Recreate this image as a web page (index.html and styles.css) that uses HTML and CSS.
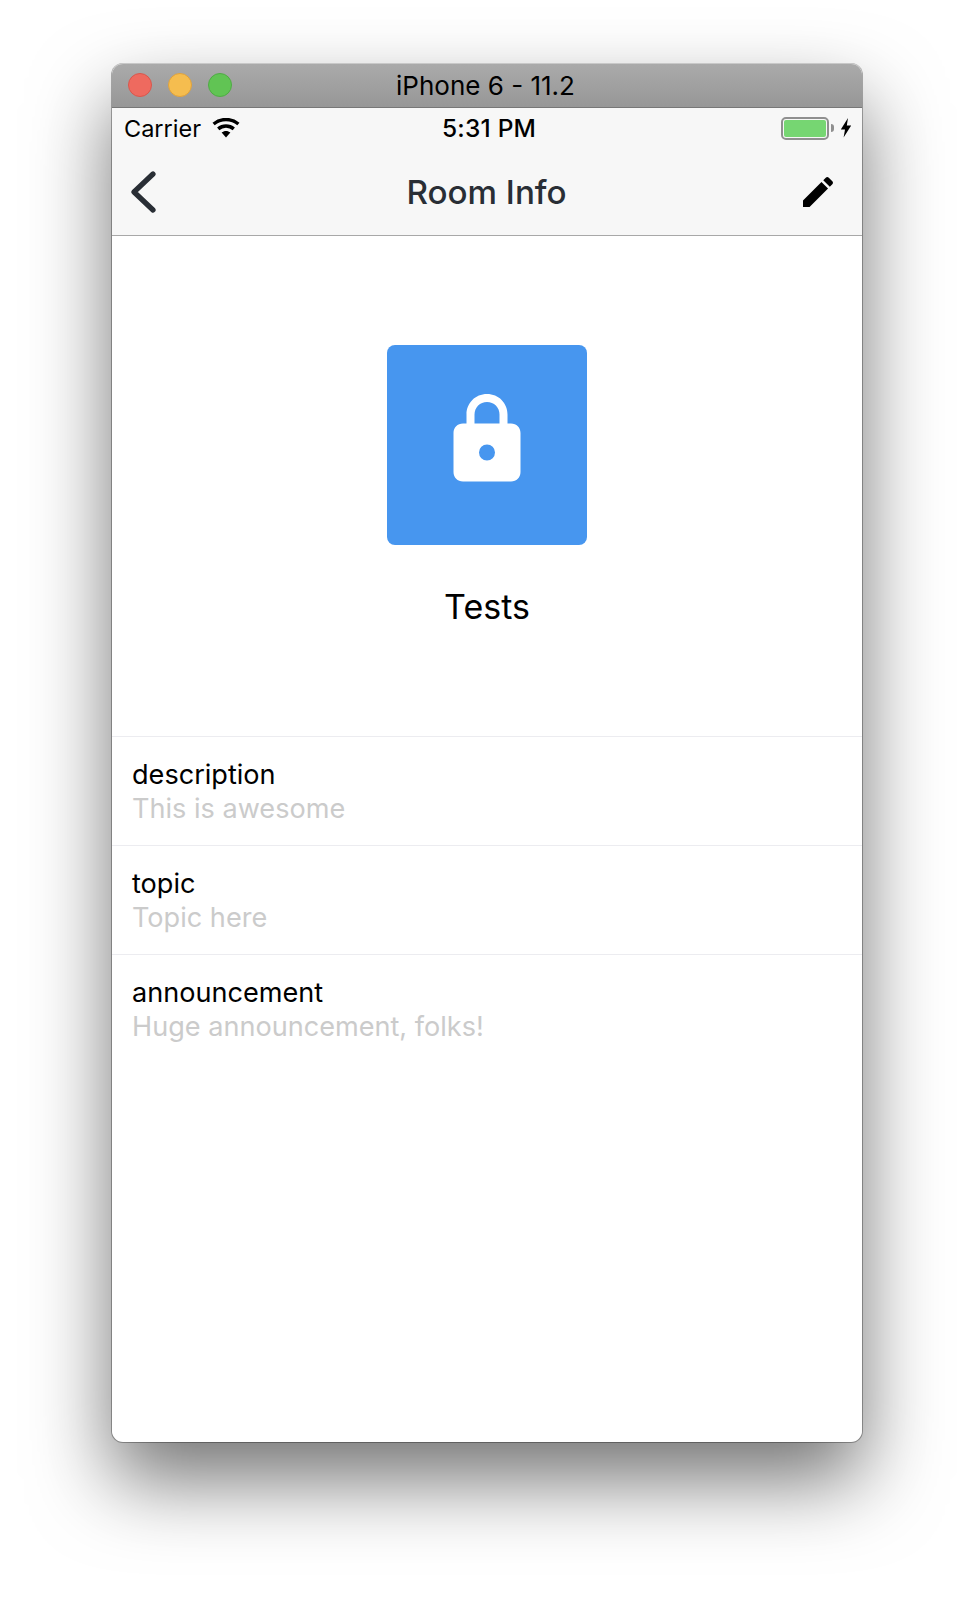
FILE: index.html
```html
<!DOCTYPE html>
<html lang="en">
<head>
    <meta charset="UTF-8">
    <meta name="viewport" content="width=device-width, initial-scale=1.0">
    <title>iPhone 6 - 11.2</title>
    <link rel="stylesheet" href="styles.css">
</head>
<body>

    <div class="window">
        <div class="titlebar">
            <div class="lights">
                <span class="light light-red"></span>
                <span class="light light-yellow"></span>
                <span class="light light-green"></span>
            </div>
            <span class="title-text">iPhone 6 - 11.2</span>
        </div>

        <div class="statusbar">
            <div class="status-left">
                <span>Carrier</span>
                <svg class="wifi" viewBox="0 0 28 20" width="28" height="20">
                    <path d="M14 19.5 L9.6 14.6 C12.2 12.4 15.8 12.4 18.4 14.6 Z" fill="#000"/>
                    <path d="M6.2 10.9 C10.8 7 17.2 7 21.8 10.9" fill="none" stroke="#000" stroke-width="3.4"/>
                    <path d="M1.600 6 C8.800 0 19.200 0 26.400 6" fill="none" stroke="#000" stroke-width="3.4"/>
                </svg>
            </div>
            <span class="status-time">5:31 PM</span>
            <div class="status-right">
                <span class="battery"><span class="battery-fill"></span></span>
                <span class="battery-tip"></span>
                <svg class="bolt" viewBox="0 0 12 20" width="12" height="20">
                    <path d="M8 0 L0.8 11.4 H5 L3.6 19.6 L11.2 7.6 H6.8 Z" fill="#000"/>
                </svg>
            </div>
        </div>

        <div class="navbar">
            <svg class="back" viewBox="0 0 26 44" width="26" height="44">
                <path d="M23 4 L4 22 L23 40" fill="none" stroke="#292e35" stroke-width="5.2" stroke-linecap="round" stroke-linejoin="round"/>
            </svg>
            <h1>Room Info</h1>
            <svg class="edit" viewBox="0 0 32 32" width="30" height="30">
                <path d="M0 25 L19.7 5.3 L26.7 12.3 L7 32 H0 Z M21.6 3.4 L24.3 0.7 C25.2 -0.2 26.6 -0.2 27.5 0.7 L31.3 4.5 C32.2 5.4 32.2 6.8 31.3 7.7 L28.6 10.4 Z" fill="#000"/>
            </svg>
        </div>

        <div class="room-head">
            <div class="avatar">
                <svg viewBox="0 0 68 88" width="68" height="88">
                    <path d="M34 0 C45.6 0 54.5 9 54.5 20.5 V31 H46.5 V20.5 C46.5 13.400 41 8 34 8 C27 8 21.500 13.400 21.500 20.5 V31 H13.500 V20.5 C13.500 9 22.400 0 34 0 Z" fill="#fff"/>
                    <path fill-rule="evenodd" d="M10 29.500 H58 C63.500 29.500 67.500 33.500 67.500 39 V78 C67.500 83.500 63.500 87.500 58 87.500 H10 C4.500 87.500 0.500 83.500 0.500 78 V39 C0.500 33.500 4.500 29.500 10 29.500 Z M34 50.500 A8 8 0 1 0 34 66.500 A8 8 0 1 0 34 50.500 Z" fill="#fff"/>
                </svg>
            </div>
            <div class="room-name">Tests</div>
        </div>

        <div class="info-list">
            <div class="info-row">
                <div class="info-label">description</div>
                <div class="info-value">This is awesome</div>
            </div>
            <div class="info-row">
                <div class="info-label">topic</div>
                <div class="info-value">Topic here</div>
            </div>
            <div class="info-row">
                <div class="info-label">announcement</div>
                <div class="info-value">Huge announcement, folks!</div>
            </div>
        </div>
    </div>

</body>
</html>
```

FILE: styles.css
```css
html, body {
    height: 100%;
}

body {
    margin: 0;
    padding: 64px 112px 0 112px;
    box-sizing: border-box;
    height: 1602px;
    overflow: hidden;
    background-color: #ffffff;
    font-family: Inter, "Liberation Sans", sans-serif;
    color: #000000;
}

.window {
    height: 1378px;
    display: flex;
    flex-direction: column;
    background-color: #ffffff;
    border-radius: 11px;
    overflow: hidden;
    box-shadow: 0 -1px 0 #c8c8c8, 0 0 0 1px rgba(0, 0, 0, 0.3), 0 38px 80px rgba(0, 0, 0, 0.55);
}

.titlebar {
    height: 44px;
    flex-shrink: 0;
    display: flex;
    align-items: center;
    justify-content: center;
    position: relative;
    padding-right: 3px;
    background: linear-gradient(#aaaaaa, #979797);
    border-bottom: 1px solid #777777;
    box-sizing: border-box;
}

.lights {
    position: absolute;
    left: 16px;
    top: 9px;
    display: flex;
    gap: 16px;
}

.light {
    width: 24px;
    height: 24px;
    border-radius: 50%;
    box-sizing: border-box;
    border: 1px solid;
}

.light-red {
    background-color: #ee6a5f;
    border-color: #d8574d;
}

.light-yellow {
    background-color: #f5bd4f;
    border-color: #dfa23c;
}

.light-green {
    background-color: #61c454;
    border-color: #50ab45;
}

.title-text {
    font-size: 26px;
    color: #000000;
}

.statusbar {
    height: 40px;
    flex-shrink: 0;
    box-sizing: border-box;
    display: flex;
    align-items: center;
    justify-content: space-between;
    position: relative;
    padding: 0 10px 0 12px;
    background-color: #f7f7f7;
    font-size: 23.5px;
}

.status-left {
    display: flex;
    align-items: center;
    gap: 11px;
}

.status-time {
    position: absolute;
    left: 330px;
    font-size: 24.5px;
    font-weight: 500;
    letter-spacing: 0.2px;
}

.status-right {
    display: flex;
    align-items: center;
}

.battery {
    width: 48px;
    height: 23px;
    box-sizing: border-box;
    border: 2px solid #8f8f8f;
    border-radius: 5px;
    padding: 1px;
    display: flex;
}

.battery-fill {
    flex: 1;
    background-color: #76d672;
    border-radius: 2px;
}

.battery-tip {
    width: 3px;
    height: 8px;
    margin-left: 2px;
    background-color: #8f8f8f;
    border-radius: 0 3px 3px 0;
}

.bolt {
    margin-left: 6px;
}

.navbar {
    height: 88px;
    flex-shrink: 0;
    display: grid;
    grid-template-columns: 1fr auto 1fr;
    align-items: center;
    padding: 0 29px 0 18px;
    background-color: #f7f7f7;
    border-bottom: 1px solid #a8a8a8;
    box-sizing: border-box;
}

.navbar h1 {
    margin: 0 0 0 10px;
    font-size: 33.2px;
    font-weight: 550;
    color: #292e35;
}

.edit {
    justify-self: end;
}

.room-head {
    height: 500px;
    flex-shrink: 0;
    box-sizing: border-box;
    padding-top: 109px;
    display: flex;
    flex-direction: column;
    align-items: center;
}

.avatar {
    width: 200px;
    height: 200px;
    border-radius: 8px;
    background-color: #4796ef;
    display: flex;
    align-items: center;
    justify-content: center;
    box-sizing: border-box;
    padding-bottom: 14px;
}

.room-name {
    margin-top: 40px;
    font-size: 34px;
    line-height: 44px;
}

.info-row {
    height: 109px;
    box-sizing: border-box;
    border-top: 1px solid #ececf0;
    padding: 21px 20px 0;
}

.info-label {
    font-size: 27.1px;
    line-height: 34px;
    color: #000000;
}

.info-value {
    font-size: 27.1px;
    line-height: 34px;
    color: #cbcbcb;
}
```
